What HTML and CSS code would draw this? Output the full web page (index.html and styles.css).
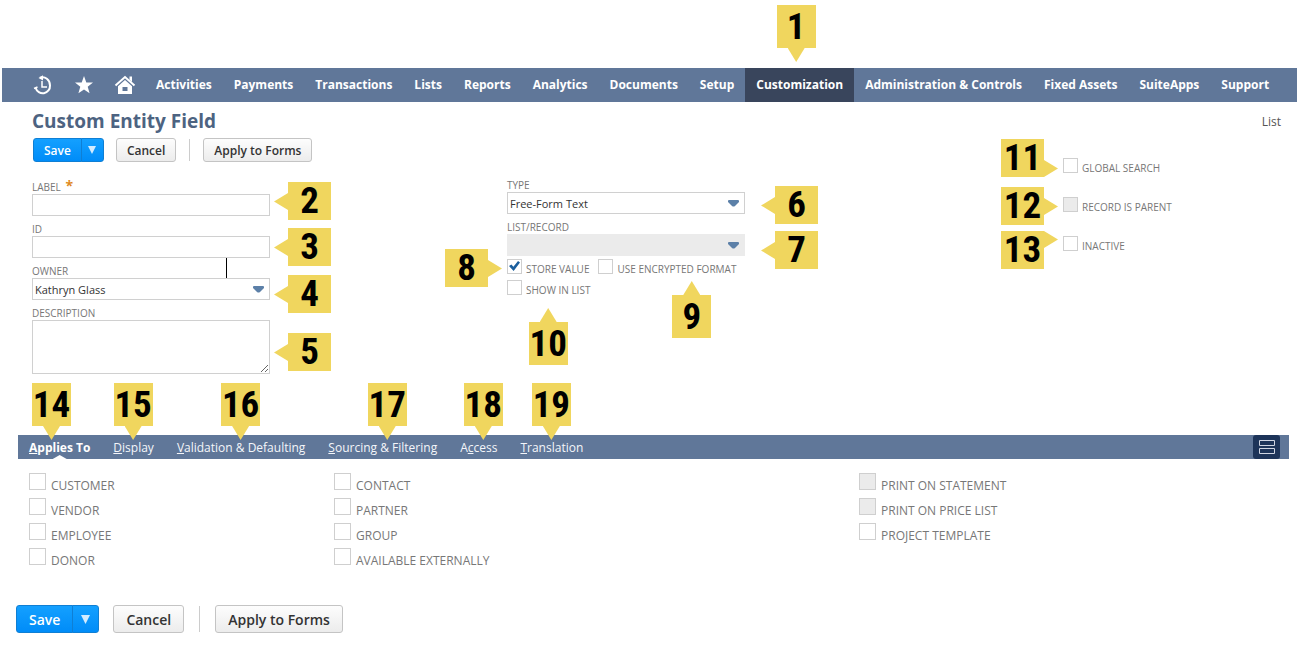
FILE: index.html
```html
<!DOCTYPE html>
<html lang="en">
<head>
<meta charset="utf-8">
<meta name="viewport" content="width=device-width, initial-scale=1">
<title>Custom Entity Field</title>
<link rel="stylesheet" href="styles.css">
</head>
<body>
<nav class="menu" aria-label="Main">
  <a class="menu-icon" href="#" aria-label="Recent records">
    <svg width="20" height="20" viewBox="0 0 20 20" fill="none" stroke="#fff"><path d="M7 2.800C12 .800 17 4.800 17 10.500a7.300 7.300 0 0 1-14.300 2.500" stroke-width="2"/><path d="M9 6v6h5" stroke-width="1.500"/><path d="M5.500 3l4.500-2.800V5.500z" fill="#fff" stroke="none"/><path d="M1 13.500l3.500-1.500" stroke-width="1.500"/></svg>
  </a>
  <a class="menu-icon" href="#" aria-label="Shortcuts">
    <svg width="20" height="20" viewBox="0 0 20 20" fill="#fff"><path d="M10 1l2.300 6.400 6.700.200-5.300 4.200 1.900 6.500-5.600-3.800-5.600 3.800 1.900-6.500L1 7.600l6.700-.200z"/></svg>
  </a>
  <a class="menu-icon" href="#" aria-label="Home">
    <svg width="22" height="20" viewBox="0 0 22 20"><path d="M1.500 10.500L11 2 20.500 10.500" fill="none" stroke="#fff" stroke-width="2"/><path d="M15.500 1.500H18V7l-2.500-2.300z" fill="#fff"/><path d="M11 5L18 11.300V19H4v-7.700zM8.500 12v4h5v-4z" fill="#fff" fill-rule="evenodd"/></svg>
  </a>
  <a class="menu-link" href="#">Activities</a>
  <a class="menu-link" href="#">Payments</a>
  <a class="menu-link" href="#">Transactions</a>
  <a class="menu-link" href="#">Lists</a>
  <a class="menu-link" href="#">Reports</a>
  <a class="menu-link" href="#">Analytics</a>
  <a class="menu-link" href="#">Documents</a>
  <a class="menu-link" href="#">Setup</a>
  <a class="menu-link is-current" href="#">Customization<span class="callout point-down">1</span></a>
  <a class="menu-link" href="#">Administration &amp; Controls</a>
  <a class="menu-link" href="#">Fixed Assets</a>
  <a class="menu-link" href="#">SuiteApps</a>
  <a class="menu-link" href="#">Support</a>
</nav>

<main>
  <header class="page-head">
    <h1>Custom Entity Field</h1>
    <a class="list-link" href="#">List</a>
  </header>
  <div class="toolbar">
    <div class="split"><button type="button" class="save">Save</button><button type="button" class="more" aria-label="More save options"><svg width="8" height="8" viewBox="0 0 8 8"><path d="M0 0h8L4 8z" fill="#d3ecff"/></svg></button></div>
    <button type="button" class="plain">Cancel</button>
    <span class="divider"></span>
    <button type="button" class="plain">Apply to Forms</button>
  </div>

  <form class="fields">
    <div class="col col-main">
      <div class="field">
        <label for="label">LABEL <span class="required">*</span></label>
        <div class="control"><input id="label" type="text"><span class="callout point-left high">2</span></div>
      </div>
      <div class="field">
        <label for="id">ID</label>
        <div class="control"><input id="id" type="text"><span class="callout point-left">3</span><span class="caret"></span></div>
      </div>
      <div class="field">
        <label for="owner">OWNER</label>
        <div class="control"><select id="owner"><option>Kathryn Glass</option></select><svg class="arrow" width="11" height="7" viewBox="0 0 11 7"><path d="M1 0h9q1 0 1 1v1L7 6q-1.500 1-3 0L0 2V1q0-1 1-1z" fill="#5c80a8"/></svg><span class="callout point-left low">4</span></div>
      </div>
      <div class="field">
        <label for="description">DESCRIPTION</label>
        <div class="control"><textarea id="description"></textarea><span class="callout point-left low">5</span></div>
      </div>
    </div>

    <div class="col col-type">
      <div class="field">
        <label for="type">TYPE</label>
        <div class="control"><select id="type"><option>Free-Form Text</option></select><svg class="arrow" width="11" height="7" viewBox="0 0 11 7"><path d="M1 0h9q1 0 1 1v1L7 6q-1.500 1-3 0L0 2V1q0-1 1-1z" fill="#5c80a8"/></svg><span class="callout point-left far">6</span></div>
      </div>
      <div class="field">
        <label for="record">LIST/RECORD</label>
        <div class="control"><select id="record" disabled><option></option></select><svg class="arrow" width="11" height="7" viewBox="0 0 11 7"><path d="M1 0h9q1 0 1 1v1L7 6q-1.500 1-3 0L0 2V1q0-1 1-1z" fill="#5c80a8"/></svg><span class="callout point-left far low">7</span></div>
      </div>
      <div class="checks">
        <div class="check"><input id="store" type="checkbox" checked><label for="store">STORE VALUE</label><span class="callout point-right">8</span></div>
        <div class="check"><input id="encrypted" type="checkbox"><label for="encrypted">USE ENCRYPTED FORMAT</label><span class="callout point-up aside">9</span></div>
      </div>
      <div class="checks">
        <div class="check"><input id="show" type="checkbox"><label for="show">SHOW IN LIST</label><span class="callout point-up lower">10</span></div>
      </div>
    </div>

    <div class="col col-flags">
      <div class="check"><input id="global" type="checkbox"><label for="global">GLOBAL SEARCH</label><span class="callout point-right tip-low">11</span></div>
      <div class="check"><input id="parent" type="checkbox" disabled><label for="parent">RECORD IS PARENT</label><span class="callout point-right">12</span></div>
      <div class="check"><input id="inactive" type="checkbox"><label for="inactive">INACTIVE</label><span class="callout point-right tip-high">13</span></div>
    </div>
  </form>

  <div class="tabs">
    <a class="tab is-open" href="#"><u>A</u>pplies To<span class="callout point-down">14</span></a>
    <a class="tab" href="#"><u>D</u>isplay<span class="callout point-down">15</span></a>
    <a class="tab" href="#"><u>V</u>alidation &amp; Defaulting<span class="callout point-down">16</span></a>
    <a class="tab" href="#"><u>S</u>ourcing &amp; Filtering<span class="callout point-down aside">17</span></a>
    <a class="tab" href="#">A<u>c</u>cess<span class="callout point-down aside">18</span></a>
    <a class="tab" href="#"><u>T</u>ranslation<span class="callout point-down">19</span></a>
    <button type="button" class="layout-toggle" aria-label="Toggle layout"><svg width="16" height="15" viewBox="0 0 16 15" fill="none" stroke="#cfd5e2"><path d="M.5.500h15v5H.5zM.5 8.500h15v5H.5z"/></svg></button>
  </div>

  <div class="applies">
    <div class="group">
      <div class="check"><input id="customer" type="checkbox"><label for="customer">CUSTOMER</label></div>
      <div class="check"><input id="vendor" type="checkbox"><label for="vendor">VENDOR</label></div>
      <div class="check"><input id="employee" type="checkbox"><label for="employee">EMPLOYEE</label></div>
      <div class="check"><input id="donor" type="checkbox"><label for="donor">DONOR</label></div>
    </div>
    <div class="group">
      <div class="check"><input id="contact" type="checkbox"><label for="contact">CONTACT</label></div>
      <div class="check"><input id="partner" type="checkbox"><label for="partner">PARTNER</label></div>
      <div class="check"><input id="group" type="checkbox"><label for="group">GROUP</label></div>
      <div class="check"><input id="external" type="checkbox"><label for="external">AVAILABLE EXTERNALLY</label></div>
    </div>
    <div class="group">
      <div class="check"><input id="statement" type="checkbox" disabled><label for="statement">PRINT ON STATEMENT</label></div>
      <div class="check"><input id="price" type="checkbox" disabled><label for="price">PRINT ON PRICE LIST</label></div>
      <div class="check"><input id="template" type="checkbox"><label for="template">PROJECT TEMPLATE</label></div>
    </div>
  </div>

  <div class="toolbar toolbar-large">
    <div class="split"><button type="button" class="save">Save</button><button type="button" class="more" aria-label="More save options"><svg width="9" height="9" viewBox="0 0 8 8"><path d="M0 0h8L4 8z" fill="#d3ecff"/></svg></button></div>
    <button type="button" class="plain">Cancel</button>
    <span class="divider"></span>
    <button type="button" class="plain">Apply to Forms</button>
  </div>
</main>
</body>
</html>
```

FILE: styles.css
```css
* { box-sizing: border-box; }

body {
  margin: 0;
  background: #fff;
  color: #333;
  font-family: "Open Sans", "Noto Sans", sans-serif;
  font-size: 12px;
}

a { color: inherit; text-decoration: none; }
button, input, select, textarea { font: inherit; color: inherit; margin: 0; }

/* Main menu */
.menu {
  display: flex;
  height: 34px;
  margin: 68px 1px 0 2px;
  padding-left: 20px;
  background: #607799;
  color: #fff;
  font-weight: 700;
  white-space: nowrap;
}
.menu-icon { display: flex; width: 41px; align-items: center; justify-content: center; }
.menu-link { position: relative; padding: 0 11px; line-height: 34px; }
.menu-link.is-current { background: #39455c; }

/* Heading and buttons */
.page-head {
  display: flex;
  align-items: center;
  justify-content: space-between;
  padding: 6px 17px 4px 32px;
}
h1 { margin: 0; color: #4d6381; font-size: 19px; line-height: 26px; }
.list-link { color: #555; }

.toolbar { display: flex; padding-left: 33px; font-weight: 600; }
.toolbar button { display: flex; height: 24px; align-items: center; justify-content: center; padding: 0 10px; border-radius: 3px; }
.split { display: flex; margin-right: 12px; }
.toolbar .save, .toolbar .more { border: 1px solid #0f7fd4; background: linear-gradient(#14a0ff, #008cf8); color: #fff; }
.toolbar .save { border-radius: 3px 0 0 3px; }
.toolbar .more { width: 23px; margin-left: -1px; padding: 0; border-radius: 0 3px 3px 0; }
.toolbar .plain { border: 1px solid #c4c4c4; background: linear-gradient(#fdfdfd, #ececec); }
.divider { width: 1px; margin: 1px 13px 1px 13px; background: #ccc; }

/* Form */
.fields { display: grid; grid-template-columns: 475fr 556fr 235fr; padding-left: 32px; color: #777; font-size: 10px; }
.col-main { padding-top: 17px; }
.col-type { padding-top: 15px; }
.col-flags { display: flex; flex-direction: column; gap: 23px; margin-top: -4px; }
.field { width: 238px; margin-bottom: 5px; }
.field > label { display: block; height: 15px; line-height: 17px; }
.required { margin-left: 2px; color: #e08a1e; font-size: 14px; font-weight: 700; line-height: 10px; }
.control { position: relative; display: flex; }
.control input, .control select, .control textarea {
  width: 100%;
  height: 22px;
  padding: 0 2px;
  border: 1px solid #d0d0d0;
  border-radius: 0;
  background: #fff;
  color: #333;
  font-size: 11px;
  appearance: none;
}
.control select:disabled { border-color: #ebebeb; background: #ebebeb; opacity: 1; }
.control textarea { height: 54px; }
.arrow { position: absolute; top: 8px; right: 6px; pointer-events: none; }
.caret { position: absolute; top: 100%; left: 194px; width: 1px; height: 21px; background: #000; }

.checks { display: flex; gap: 9px; margin-bottom: 3px; }
.col-type .field + .checks { margin-top: -2px; }
.check { position: relative; display: flex; align-items: flex-start; gap: 4px; white-space: nowrap; }
.check input {
  flex: none;
  width: 15px;
  height: 15px;
  border: 1px solid #cfcfcf;
  background: #fff;
  appearance: none;
}
.check input:disabled { background: #ebebeb; }
.check input:checked::before {
  content: "";
  display: block;
  width: 11px;
  height: 10px;
  margin: 1px;
  background: #1b5f9e;
  clip-path: polygon(0 50%, 22% 36%, 40% 58%, 82% 0, 100% 14%, 42% 100%);
}
.check label { padding-top: 3px; line-height: 15px; }
.col-flags .check { height: 16px; }

/* Tabs */
.tabs {
  display: flex;
  gap: 23px;
  height: 24px;
  margin: 56px 9px 0 18px;
  padding: 0 9px 0 11px;
  background: #607799;
  color: #f4f6fa;
  line-height: 25px;
  white-space: nowrap;
}
.tab { position: relative; }
.tab.is-open { color: #fff; font-weight: 700; }
.tab.is-open::after {
  content: "";
  position: absolute;
  bottom: 0;
  left: 50%;
  width: 14px;
  height: 4px;
  margin-left: -7px;
  background: #fff;
  clip-path: polygon(50% 0, 100% 100%, 0 100%);
}
.layout-toggle {
  display: flex;
  width: 27px;
  margin-left: auto;
  padding: 0;
  align-items: center;
  justify-content: center;
  border: 0;
  border-radius: 3px;
  background: #1d3459;
}

.applies { display: grid; grid-template-columns: 305fr 525fr 439fr; padding: 14px 0 0 29px; color: #777; font-size: 12px; }
.group { display: flex; flex-direction: column; gap: 7px; }
.applies .check { height: 18px; gap: 5px; }
.applies .check input { width: 17px; height: 17px; }
.applies .check label { padding-top: 4px; line-height: 17px; }

.toolbar-large { margin-top: 39px; padding: 0 0 13px 16px; font-size: 14px; }
.toolbar-large button { height: 28px; padding: 0 12px; }
.toolbar-large .more { width: 27px; }
.toolbar-large .split { margin-right: 14px; }
.toolbar-large .divider { margin: 1px 15px; }

/* Numbered callouts that point at the controls */
.callout {
  position: absolute;
  z-index: 1;
  width: 43px;
  height: 38px;
  background: #f0d65e;
  color: #000;
  font: 700 37px/38px "Roboto Condensed", Roboto, sans-serif;
  text-align: center;
}
.callout::after { content: ""; position: absolute; background: #f0d65e; }

.point-down, .point-up { width: 39px; height: 43px; left: 50%; margin-left: -20px; line-height: 44px; }
.point-down::after, .point-up::after { left: 11px; width: 17px; height: 14px; }
.point-down::after { top: 100%; clip-path: polygon(0 0, 100% 0, 50% 100%); }
.point-up { top: 36px; }
.point-up::after { bottom: 100%; clip-path: polygon(50% 0, 100% 100%, 0 100%); }
.point-up.lower { top: 42px; }
.point-up.aside { left: 68%; }
.menu .point-down { bottom: 54px; margin-left: -23px; }
.tabs .point-down { bottom: 33px; }
.tabs .point-down.aside { margin-left: -15px; }
.tab.is-open .point-down { left: 23px; }

.point-left { left: 100%; top: 50%; margin: -19px 0 0 18px; }
.point-left.far { margin: -17px 0 0 30px; }
.point-left.low { margin-top: -14px; }
.point-left.high { margin-top: -23px; }
.point-left::after, .point-right::after { top: 11px; width: 14px; height: 17px; }
.point-left::after { right: 100%; clip-path: polygon(0 50%, 100% 0, 100% 100%); }
.point-right { right: 100%; top: -10px; margin-right: 19px; }
.point-right::after { left: 100%; clip-path: polygon(0 0, 100% 50%, 0 100%); }
.point-right.tip-low { top: -19px; }
.point-right.tip-low::after { top: 21px; }
.point-right.tip-high { top: -5px; }
.point-right.tip-high::after { top: 0; }
```
